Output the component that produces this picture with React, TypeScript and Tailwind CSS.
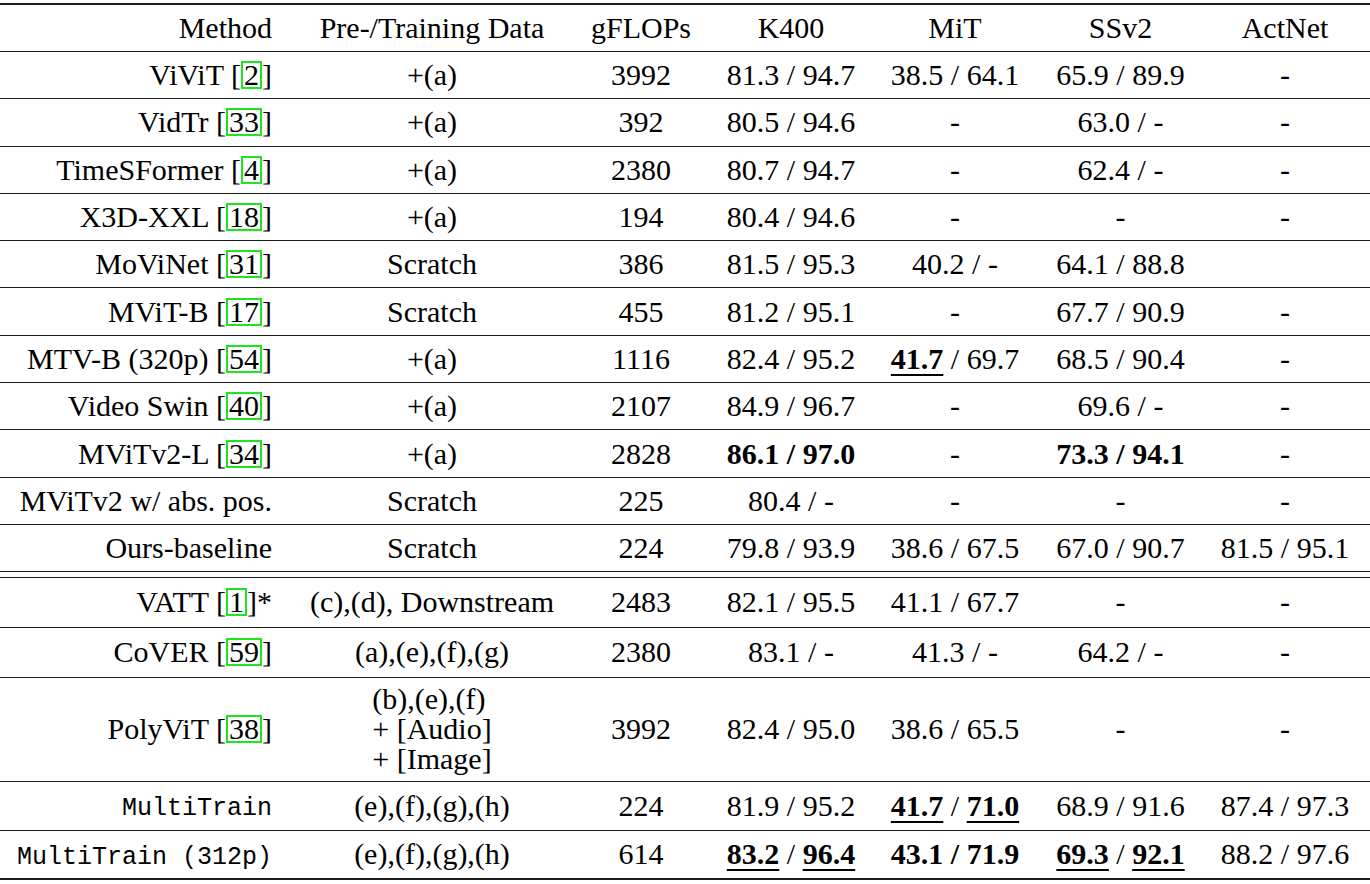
import React from 'react';

type Cell = React.ReactNode;

interface Row {
  method: Cell;
  data: Cell;
  flops: string;
  k400: Cell;
  mit: Cell;
  ssv2: Cell;
  actnet: Cell;
  h: string;
}

const cols = 'grid grid-cols-[292px_280px_138px_162px_166px_165px_164px] items-center';

// citation box like hyperref's green frame
function Cite({ n }: { n: string }) {
  return (
    <>
      [<span className="inline-block border-2 border-[#1ee61e] px-[1px] leading-[24px]">{n}</span>]
    </>
  );
}

function B({ children }: { children: React.ReactNode }) {
  return <span className="font-bold">{children}</span>;
}

function BU({ children }: { children: React.ReactNode }) {
  return (
    <span className="font-bold underline decoration-[1.5px] underline-offset-[5px]">{children}</span>
  );
}

function Mono({ children }: { children: React.ReactNode }) {
  return (
    <span className="font-[family-name:'Liberation_Mono','Courier_New',monospace] text-[25px]">{children}</span>
  );
}

const top: Row[] = [
  { method: <>ViViT <Cite n="2" /></>, data: '+(a)', flops: '3992', k400: '81.3 / 94.7', mit: '38.5 / 64.1', ssv2: '65.9 / 89.9', actnet: '-', h: 'h-[47.3px]' },
  { method: <>VidTr <Cite n="33" /></>, data: '+(a)', flops: '392', k400: '80.5 / 94.6', mit: '-', ssv2: '63.0 / -', actnet: '-', h: 'h-[47.3px]' },
  { method: <>TimeSFormer <Cite n="4" /></>, data: '+(a)', flops: '2380', k400: '80.7 / 94.7', mit: '-', ssv2: '62.4 / -', actnet: '-', h: 'h-[47.3px]' },
  { method: <>X3D-XXL <Cite n="18" /></>, data: '+(a)', flops: '194', k400: '80.4 / 94.6', mit: '-', ssv2: '-', actnet: '-', h: 'h-[47.3px]' },
  { method: <>MoViNet <Cite n="31" /></>, data: 'Scratch', flops: '386', k400: '81.5 / 95.3', mit: '40.2 / -', ssv2: '64.1 / 88.8', actnet: '', h: 'h-[47.3px]' },
  { method: <>MViT-B <Cite n="17" /></>, data: 'Scratch', flops: '455', k400: '81.2 / 95.1', mit: '-', ssv2: '67.7 / 90.9', actnet: '-', h: 'h-[47.3px]' },
  { method: <>MTV-B (320p) <Cite n="54" /></>, data: '+(a)', flops: '1116', k400: '82.4 / 95.2', mit: <><BU>41.7</BU> / 69.7</>, ssv2: '68.5 / 90.4', actnet: '-', h: 'h-[47.3px]' },
  { method: <>Video Swin <Cite n="40" /></>, data: '+(a)', flops: '2107', k400: '84.9 / 96.7', mit: '-', ssv2: '69.6 / -', actnet: '-', h: 'h-[47.3px]' },
  { method: <>MViTv2-L <Cite n="34" /></>, data: '+(a)', flops: '2828', k400: <B>86.1 / 97.0</B>, mit: '-', ssv2: <B>73.3 / 94.1</B>, actnet: '-', h: 'h-[47.3px]' },
  { method: 'MViTv2 w/ abs. pos.', data: 'Scratch', flops: '225', k400: '80.4 / -', mit: '-', ssv2: '-', actnet: '-', h: 'h-[47.3px]' },
  { method: 'Ours-baseline', data: 'Scratch', flops: '224', k400: '79.8 / 93.9', mit: '38.6 / 67.5', ssv2: '67.0 / 90.7', actnet: '81.5 / 95.1', h: 'h-[47.3px]' },
];

const bottom: Row[] = [
  { method: <>VATT <Cite n="1" />*</>, data: '(c),(d), Downstream', flops: '2483', k400: '82.1 / 95.5', mit: '41.1 / 67.7', ssv2: '-', actnet: '-', h: 'h-[50px]' },
  { method: <>CoVER <Cite n="59" /></>, data: '(a),(e),(f),(g)', flops: '2380', k400: '83.1 / -', mit: '41.3 / -', ssv2: '64.2 / -', actnet: '-', h: 'h-[50px]' },
  {
    method: <>PolyViT <Cite n="38" /></>,
    data: (
      <div className="inline-block text-left leading-[30px]">
        <div>(b),(e),(f)</div>
        <div>+ [Audio]</div>
        <div>+ [Image]</div>
      </div>
    ),
    flops: '3992', k400: '82.4 / 95.0', mit: '38.6 / 65.5', ssv2: '-', actnet: '-', h: 'h-[104px]',
  },
  { method: <Mono>MultiTrain</Mono>, data: '(e),(f),(g),(h)', flops: '224', k400: '81.9 / 95.2', mit: <><BU>41.7</BU> / <BU>71.0</BU></>, ssv2: '68.9 / 91.6', actnet: '87.4 / 97.3', h: 'h-[49px]' },
  { method: <Mono>MultiTrain (312p)</Mono>, data: '(e),(f),(g),(h)', flops: '614', k400: <><BU>83.2</BU> / <BU>96.4</BU></>, mit: <B>43.1 / 71.9</B>, ssv2: <><BU>69.3</BU> / <BU>92.1</BU></>, actnet: '88.2 / 97.6', h: 'h-[49px]' },
];

function TableRow({ row, last }: { row: Row; last?: boolean }) {
  return (
    <div className={`${cols} ${row.h} box-border ${last ? 'border-b-2' : 'border-b'} border-[#1c1c1c]`}>
      <div className="text-right pr-[20px] whitespace-nowrap">{row.method}</div>
      <div className="text-center whitespace-nowrap">{row.data}</div>
      <div className="text-center">{row.flops}</div>
      <div className="text-center whitespace-nowrap">{row.k400}</div>
      <div className="text-center whitespace-nowrap">{row.mit}</div>
      <div className="text-center whitespace-nowrap">{row.ssv2}</div>
      <div className="text-center whitespace-nowrap">{row.actnet}</div>
    </div>
  );
}

export default function App() {
  return (
    <div className="w-[1370px] h-[884px] bg-white pt-[3px] text-black text-[30px] leading-none font-[family-name:'Liberation_Serif','Times_New_Roman',serif]">
      {/* header */}
      <div className={`${cols} h-[49px] box-border border-t-2 border-b border-[#1c1c1c]`}>
        <div className="text-right pr-[20px]">Method</div>
        <div className="text-center">Pre-/Training Data</div>
        <div className="text-center">gFLOPs</div>
        <div className="text-center">K400</div>
        <div className="text-center">MiT</div>
        <div className="text-center">SSv2</div>
        <div className="text-center">ActNet</div>
      </div>

      {top.map((row, i) => (
        <TableRow key={i} row={row} />
      ))}

      {/* double rule */}
      <div className="h-[5.5px] box-border border-b border-[#1c1c1c]" />

      {bottom.map((row, i) => (
        <TableRow key={i} row={row} last={i === bottom.length - 1} />
      ))}
    </div>
  );
}
